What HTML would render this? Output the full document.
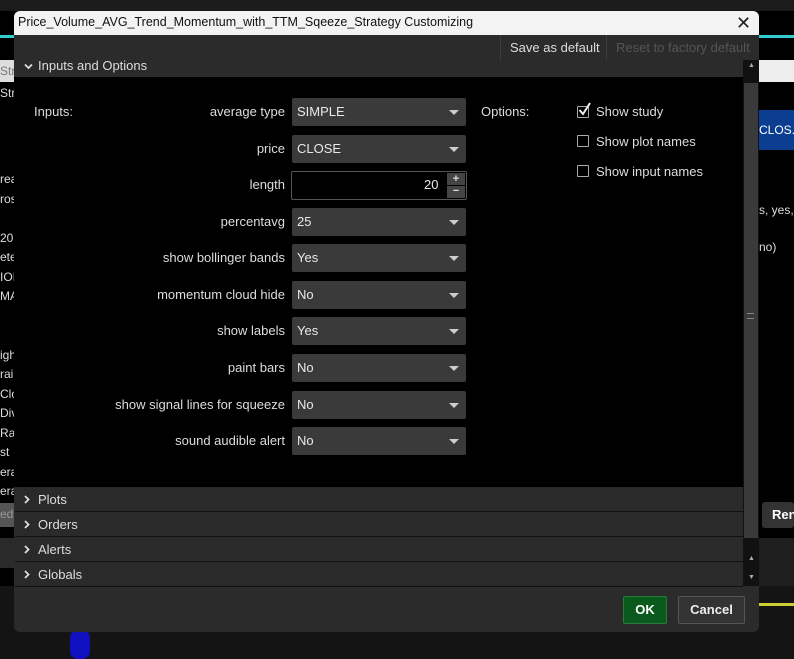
<!DOCTYPE html>
<html><head><meta charset="utf-8"><style>
*{box-sizing:border-box;margin:0;padding:0}
body{width:794px;height:659px;background:#000;position:relative;overflow:hidden;font-family:"Liberation Sans",sans-serif;color:#ddd;font-size:13px}
.a{position:absolute}
.lbl{position:absolute;right:509px;text-align:right;white-space:nowrap;color:#ddd}
.fld{position:absolute;left:292px;width:174px;height:28px;background:#3a3a3a;border-radius:2px;padding:6px 5px;color:#e8e8e8}
.fld:after{content:"";position:absolute;right:7px;top:12px;border-left:5px solid transparent;border-right:5px solid transparent;border-top:5px solid #ccc}
.sec{position:absolute;left:15px;width:728px;height:25px;background:#2a2a2a;border-bottom:1px solid #111;padding:5px 0 0 23px;color:#ddd}
.sec svg{position:absolute;left:9px;top:8px}
.cb{position:absolute;left:577px;width:12px;height:12px;border:1px solid #aaa;border-radius:1px}
</style></head><body>
<div class="a" style="left:0;top:0;width:794px;height:11px;background:#1b1b1b"></div>
<div class="a" style="left:0;top:35px;width:14px;height:3px;background:#3cc"></div>
<div class="a" style="left:759px;top:35px;width:35px;height:3px;background:#3cc"></div>
<div class="a" style="left:0;top:60px;width:14px;height:22px;background:#ddd;color:#777;padding:4px 0 0 0;font-size:12px">Str</div>
<div class="a" style="left:0;top:86px;width:14px;color:#ddd;font-size:12px">Str</div>
<div class="a" style="left:759px;top:60px;width:35px;height:22px;background:#eee"></div>
<div class="a" style="left:759px;top:110px;width:35px;height:40px;background:#0b3d91;color:#fff;padding:13px 0 0 0;font-size:12px">CLOS..</div>
<div class="a" style="left:759px;top:203px;color:#ddd;font-size:12px;white-space:nowrap">s, yes, y</div>
<div class="a" style="left:759px;top:240px;color:#ddd;font-size:12px">no)</div>
<div class="a" style="left:762px;top:502px;width:32px;height:26px;background:#333;border-radius:3px;color:#fff;font-weight:bold;padding:5px 0 0 10px">Ren</div>
<div class="a" style="left:0;top:503px;width:14px;height:24px;background:#555;color:#999;font-size:12px;padding:4px 0 0 0">ed</div>
<div class="a" style="left:0;top:538px;width:14px;height:30px;background:#2a2a2a"></div>
<div class="a" style="left:759px;top:538px;width:35px;height:50px;background:#1e1e1e"></div>
<div class="a" style="left:0;top:586px;width:794px;height:73px;background:#141414"></div>
<div class="a" style="left:759px;top:603px;width:35px;height:3px;background:#cc3"></div>
<div class="a" style="left:70px;top:630px;width:20px;height:29px;background:#1010c0;border-radius:8px"></div>
<div class="a" style="left:0;top:170px;font-size:12px;line-height:19.5px;color:#ddd;width:14px;overflow:hidden;white-space:nowrap">rea<br>ros<br><br>202<br>ete<br>IOI<br>MA<br><br><br>igh<br>rail<br>Clo<br>Div<br>Rat<br>st<br>era<br>era</div>
<div class="a" style="left:14px;top:11px;width:745px;height:621px;background:#2b2b2b;border-radius:6px;overflow:hidden">
 <div class="a" style="left:0;top:0;width:745px;height:24px;background:#f3f3f3;color:#111;padding:4px 0 0 4px;font-size:12.5px">Price_Volume_AVG_Trend_Momentum_with_TTM_Sqeeze_Strategy Customizing</div>
 <div class="a" style="left:722px;top:2px;color:#222;font-size:18px">✕</div>
 <div class="a" style="left:486px;top:24px;width:1px;height:26px;background:#3c3c3c"></div>
 <div class="a" style="left:496px;top:29px;color:#ddd">Save as default</div>
 <div class="a" style="left:592px;top:24px;width:1px;height:26px;background:#3c3c3c"></div>
 <div class="a" style="left:602px;top:29px;color:#555;white-space:nowrap">Reset to factory default</div>
</div>
<div class="a" style="left:14px;top:60px;width:729px;height:17px;background:#2b2b2b"></div>
<svg class="a" style="left:24px;top:63px" width="9" height="7"><path d="M1 1.5 L4.5 5 L8 1.5" stroke="#ddd" stroke-width="1.8" fill="none"/></svg>
<div class="a" style="left:38px;top:58px;color:#ddd">Inputs and Options</div>
<div class="a" style="left:14px;top:77px;width:729px;height:410px;background:#000"></div>
<div class="a" style="left:743px;top:60px;width:16px;height:526px;background:#111"></div>
<div class="a" style="left:744px;top:83px;width:14px;height:455px;background:#3a3a3a"></div>
<div class="a" style="left:747px;top:313px;width:7px;height:6px;border-top:1px solid #888;border-bottom:1px solid #888"></div>
<div class="a" style="left:748px;top:62px;font-size:7px;color:#aaa">▲</div>
<div class="a" style="left:748px;top:555px;font-size:7px;color:#aaa">▲</div>
<div class="a" style="left:748px;top:574px;font-size:7px;color:#aaa">▼</div>

<div class="a" style="left:34px;top:104px">Inputs:</div>
<div class="a" style="left:481px;top:104px">Options:</div>

<div class="lbl" style="top:104px">average type</div><div class="fld" style="top:98px">SIMPLE</div>
<div class="lbl" style="top:141px">price</div><div class="fld" style="top:135px">CLOSE</div>
<div class="lbl" style="top:177px">length</div>
<div class="a" style="left:291px;top:171px;width:176px;height:29px;border:1px solid #555;border-radius:2px;background:#000"></div>
<div class="a" style="left:424px;top:177px;color:#e8e8e8">20</div>
<div class="a" style="left:447px;top:173px;width:18px;height:12px;background:#444;color:#ddd;font-size:11px;text-align:center;line-height:12px;font-weight:bold">+</div>
<div class="a" style="left:447px;top:186px;width:18px;height:12px;background:#444;color:#ddd;font-size:11px;text-align:center;line-height:11px;font-weight:bold">−</div>
<div class="lbl" style="top:214px">percentavg</div><div class="fld" style="top:208px">25</div>
<div class="lbl" style="top:250px">show bollinger bands</div><div class="fld" style="top:244px">Yes</div>
<div class="lbl" style="top:287px">momentum cloud hide</div><div class="fld" style="top:281px">No</div>
<div class="lbl" style="top:323px">show labels</div><div class="fld" style="top:317px">Yes</div>
<div class="lbl" style="top:360px">paint bars</div><div class="fld" style="top:354px">No</div>
<div class="lbl" style="top:397px">show signal lines for squeeze</div><div class="fld" style="top:391px">No</div>
<div class="lbl" style="top:433px">sound audible alert</div><div class="fld" style="top:427px">No</div>

<div class="cb" style="top:106px"></div>
<svg class="a" style="left:578px;top:102px" width="13" height="14"><path d="M1.5 8 L5 12 L12 1" stroke="#eee" stroke-width="2" fill="none"/></svg>
<div class="a" style="left:596px;top:104px">Show study</div>
<div class="cb" style="top:135px"></div><div class="a" style="left:596px;top:134px">Show plot names</div>
<div class="cb" style="top:165px"></div><div class="a" style="left:596px;top:164px">Show input names</div>

<div class="sec" style="top:487px"><svg width="6" height="9"><path d="M1 1 L4.5 4.5 L1 8" stroke="#ddd" stroke-width="1.8" fill="none"/></svg>Plots</div>
<div class="sec" style="top:512px"><svg width="6" height="9"><path d="M1 1 L4.5 4.5 L1 8" stroke="#ddd" stroke-width="1.8" fill="none"/></svg>Orders</div>
<div class="sec" style="top:537px"><svg width="6" height="9"><path d="M1 1 L4.5 4.5 L1 8" stroke="#ddd" stroke-width="1.8" fill="none"/></svg>Alerts</div>
<div class="sec" style="top:562px"><svg width="6" height="9"><path d="M1 1 L4.5 4.5 L1 8" stroke="#ddd" stroke-width="1.8" fill="none"/></svg>Globals</div>

<div class="a" style="left:623px;top:596px;width:44px;height:28px;background:#0a5a1e;border:1px solid #2a7a3a;border-radius:2px;color:#fff;font-weight:bold;text-align:center;line-height:26px">OK</div>
<div class="a" style="left:678px;top:596px;width:67px;height:28px;background:#333;border:1px solid #555;border-radius:2px;color:#eee;font-weight:bold;text-align:center;line-height:26px">Cancel</div>
</body></html>
